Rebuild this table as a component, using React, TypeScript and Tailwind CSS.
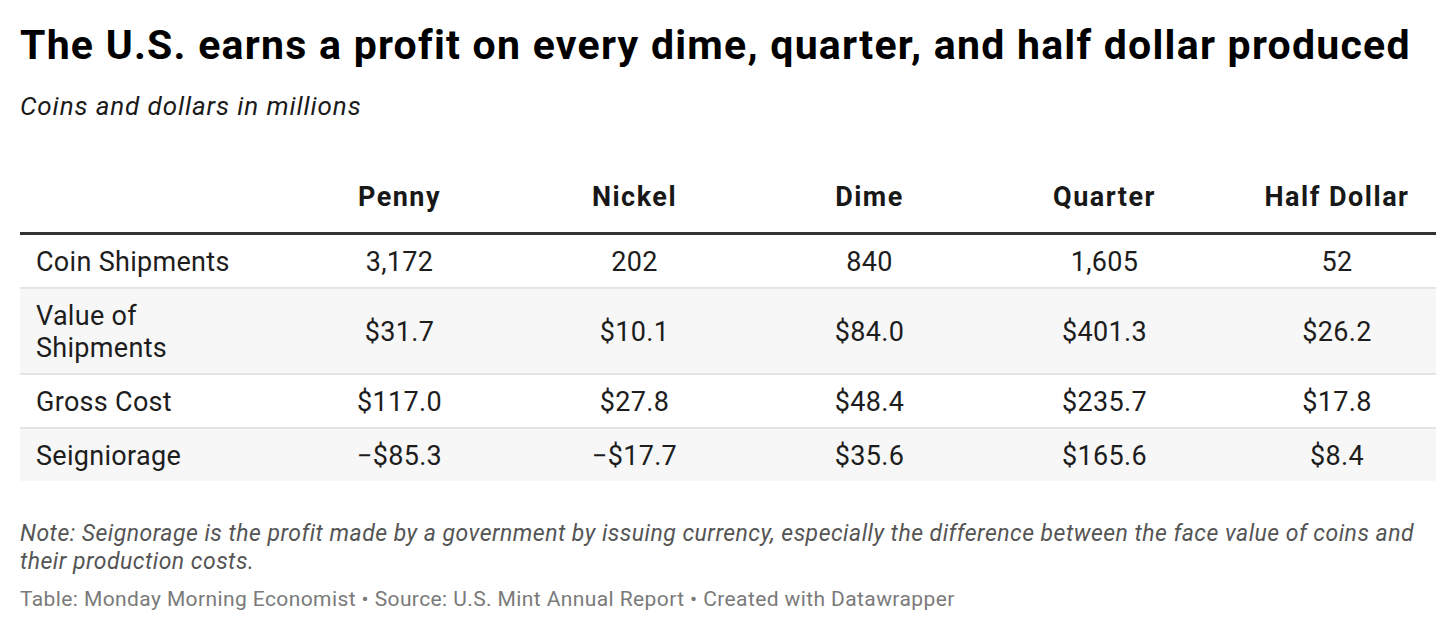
const columns = ['Penny', 'Nickel', 'Dime', 'Quarter', 'Half Dollar'];

const rows: { label: string[]; values: string[] }[] = [
    { label: ['Coin Shipments'], values: ['3,172', '202', '840', '1,605', '52'] },
    { label: ['Value of', 'Shipments'], values: ['$31.7', '$10.1', '$84.0', '$401.3', '$26.2'] },
    { label: ['Gross Cost'], values: ['$117.0', '$27.8', '$48.4', '$235.7', '$17.8'] },
    { label: ['Seigniorage'], values: ['\u2212$85.3', '\u2212$17.7', '$35.6', '$165.6', '$8.4'] }
];

const grid = 'grid grid-cols-[262px_235px_235px_235px_235px_1fr]';

export default function App() {
    return (
        <div className="h-[632px] w-[1456px] overflow-hidden bg-white px-5 pt-[21px] font-['Roboto',sans-serif]">
            <h1 className="whitespace-nowrap text-[41px] font-bold leading-[48px] tracking-[1.25px] text-black">
                The U.S. earns a profit on every dime, quarter, and half dollar produced
            </h1>
            <p className="mt-[21px] text-[26px] italic leading-8 tracking-[0.9px] text-[#1a1a1a]">Coins and dollars in millions</p>

            <div className="mt-[59px] w-[1416px]">
                <div className={`${grid} border-b-[3px] border-[#333] pb-[19px] text-[27px] font-bold leading-8 tracking-[1.5px] text-[#181818]`}>
                    <div></div>
                    {columns.map((col, i) => (
                        <div key={col} className={i === 4 ? 'pl-4 text-center' : 'text-center'}>{col}</div>
                    ))}
                </div>
                {rows.map((row, r) => (
                    <div
                        key={r}
                        className={`${grid} items-center pt-[11px] pb-[9px] text-[27px] leading-8 tracking-[0.3px] text-[#1d1d1d] ${r % 2 === 1 ? 'bg-[#f7f7f7]' : 'bg-white'} ${r < rows.length - 1 ? 'border-b-2 border-[#e4e4e4]' : ''}`}
                    >
                        <div className="pl-4">
                            {row.label.map((l) => (
                                <div key={l}>{l}</div>
                            ))}
                        </div>
                        {row.values.map((v, i) => (
                            <div key={i} className={i === 4 ? 'pl-4 text-center' : 'text-center'}>{v}</div>
                        ))}
                    </div>
                ))}
            </div>

            <p className="mt-[39px] w-[1416px] text-[23px] italic leading-7 tracking-[0.48px] text-[#555]">
                Note: Seignorage is the profit made by a government by issuing currency, especially the difference between the face value of coins and their production costs.
            </p>
            <p className="mt-[9px] text-[21px] leading-7 tracking-[0.4px] text-[#7a7a7a]">
                Table: Monday Morning Economist • Source: U.S. Mint Annual Report • Created with Datawrapper
            </p>
        </div>
    );
}
